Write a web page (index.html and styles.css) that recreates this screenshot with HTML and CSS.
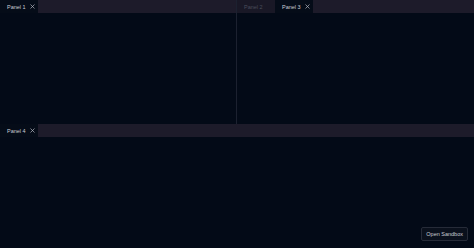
FILE: index.html
```html
<!DOCTYPE html>
<html lang="en">
<head>
    <meta charset="UTF-8">
    <meta name="viewport" content="width=device-width, initial-scale=1.0">
    <title>Panels</title>
    <link rel="stylesheet" href="styles.css">
</head>
<body>
    <div class="layout">
        <div class="row top">
            <div class="group left">
                <div class="tabbar">
                    <div class="tab active">
                        <span class="label">Panel 1</span>
                        <svg class="close" viewBox="0 0 10 10"><path d="M1 1L9 9M9 1L1 9"/></svg>
                    </div>
                </div>
                <div class="content"></div>
            </div>
            <div class="group right">
                <div class="tabbar">
                    <div class="tab">
                        <span class="label">Panel 2</span>
                    </div>
                    <div class="tab active">
                        <span class="label">Panel 3</span>
                        <svg class="close" viewBox="0 0 10 10"><path d="M1 1L9 9M9 1L1 9"/></svg>
                    </div>
                </div>
                <div class="content"></div>
            </div>
        </div>
        <div class="row bottom">
            <div class="group">
                <div class="tabbar">
                    <div class="tab active">
                        <span class="label">Panel 4</span>
                        <svg class="close" viewBox="0 0 10 10"><path d="M1 1L9 9M9 1L1 9"/></svg>
                    </div>
                </div>
                <div class="content"></div>
            </div>
        </div>
    </div>
    <button class="sandbox-btn">Open Sandbox</button>
</body>
</html>
```

FILE: styles.css
```css
body {
    margin: 0;
    height: 100vh;
    overflow: hidden;
    background-color: #030a17;
    font-family: "Liberation Sans", Arial, sans-serif;
    color: #c9ccd6;
}
.layout {
    display: flex;
    flex-direction: column;
    height: 100%;
}
.row {
    display: flex;
}
.row.top {
    height: 124px;
}
.row.bottom {
    flex: 1;
}
.group {
    display: flex;
    flex-direction: column;
    flex: 1;
}
.group.left {
    flex: 0 0 236px;
}
.group.right {
    border-left: 1px solid #1c2130;
}
.tabbar {
    display: flex;
    height: 13px;
    background-color: #1d1b2a;
}
.tab {
    display: flex;
    align-items: center;
    gap: 4px;
    padding: 0 0 0 7px;
    width: 38px;
    flex-shrink: 0;
    box-sizing: border-box;
    white-space: nowrap;
    font-size: 5.5px;
    color: #4a4d5c;
    background-color: #191826;
}
.tab.active {
    background-color: #050c18;
    color: #c9ccd6;
}
.close {
    width: 5px;
    height: 5px;
    stroke: #b4b7c2;
    stroke-width: 1.4;
    fill: none;
}
.content {
    flex: 1;
}
.sandbox-btn {
    position: absolute;
    right: 6px;
    bottom: 7px;
    height: 14px;
    padding: 0 4px;
    white-space: nowrap;
    background-color: #0a101c;
    color: #c9ccd6;
    border: 1px solid #262b38;
    border-radius: 2px;
    font-family: "Liberation Sans", Arial, sans-serif;
    font-size: 5.5px;
}
```
